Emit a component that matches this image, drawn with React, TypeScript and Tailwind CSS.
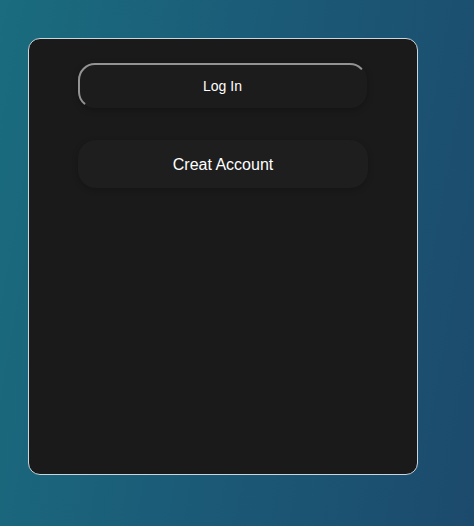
import React from "react";

export default function App() {
  return (
    <div
      className="w-[474px] h-[526px] bg-[linear-gradient(100deg,#1a6c7e_0%,#1b5a77_50%,#1c4a6c_100%)] pt-[38px] pl-[28px]"
      style={{ fontFamily: '"Liberation Sans", Arial, sans-serif' }}
    >
      <div className="w-[390px] h-[437px] rounded-[12px] border border-[#c9d6de] bg-[#1a1a1a] px-[49px] pt-[24px] flex flex-col gap-[32px]">
        <div className="relative w-[289px] h-[45px] rounded-[16px] bg-[#1c1c1c] shadow-[0_2px_6px_rgba(0,0,0,0.25)] flex items-center justify-center text-white text-[14px] pt-[1px]">
          <svg
            className="absolute left-0 top-0"
            width="289"
            height="45"
            viewBox="0 0 289 45"
            fill="none"
          >
            <path
              d="M 6.4 40.6 A 16 16 0 0 1 1 28.5 L 1 17 A 16 16 0 0 1 17 1 L 272 1 A 16 16 0 0 1 283.3 5.7"
              stroke="#939393"
              strokeWidth="2"
              strokeLinecap="round"
            />
          </svg>
          <span className="relative">Log In</span>
        </div>
        <div className="w-[290px] h-[48px] rounded-[18px] bg-[#1e1e1e] shadow-[0_2px_6px_rgba(0,0,0,0.2)] flex items-center justify-center text-white text-[16px] pt-[1px]">
          Creat Account
        </div>
      </div>
    </div>
  );
}
